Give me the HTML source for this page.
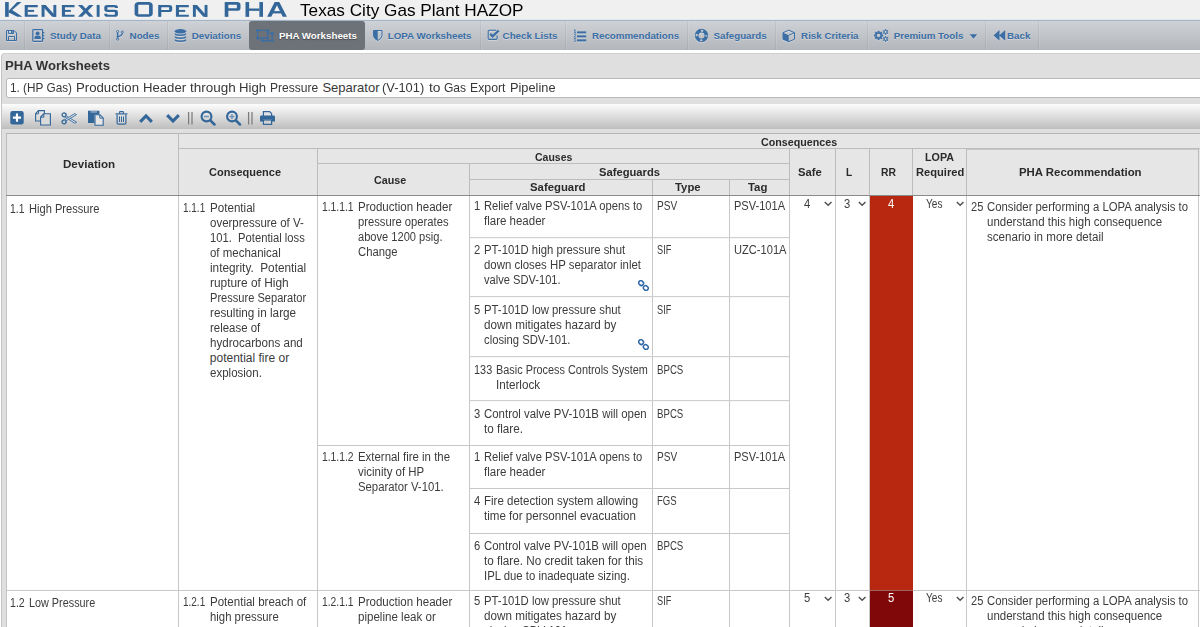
<!DOCTYPE html>
<html><head><meta charset="utf-8"><title>Kenexis Open PHA</title>
<style>
html,body{margin:0;padding:0;}
body{width:1200px;height:627px;overflow:hidden;background:#ffffff;font-family:"Liberation Sans", sans-serif;position:relative;}
#root{position:absolute;left:0;top:0;width:1200px;height:627px;overflow:hidden;}
#root div,#root svg{position:absolute;}
.t{position:absolute;white-space:pre;transform-origin:0 0;display:block;}
</style></head><body><div id="root">
<div style="left:0px;top:0px;width:1200px;height:20px;background:#f0f0f0;"></div>
<svg style="left:0;top:0" width="300" height="20" viewBox="0 0 300 20"><g transform="scale(1.4,1)"><path d="M3.64286 2.05 L6.24286 2.05 L6.24286 16.85 L3.64286 16.85 Z" fill="#336699"/><path d="M6.1 11.05 L12.2143 2.05 L15.3571 2.05 L8.67143 10.05 L16.0714 16.85 L12.3571 16.85 L6.67143 12.85 L6.1 13.65 Z" fill="#336699"/><path d="M17.6429 4.95 L26.9286 4.95 L26.9286 7.15 L19.8429 7.15 L19.8429 14.65 L26.9286 14.65 L26.9286 16.85 L17.6429 16.85 Z" fill="#336699"/><path d="M19.7714 9.91 L24.3571 9.91 L24.3571 11.89 L19.7714 11.89 Z" fill="#336699"/><path d="M29.7143 4.95 L31.8043 4.95 L31.8043 16.85 L29.7143 16.85 Z" fill="#336699"/><path d="M38.1243 4.95 L40.2143 4.95 L40.2143 16.85 L38.1243 16.85 Z" fill="#336699"/><path d="M29.7143 4.95 L32.6614 4.95 L40.2143 16.65 L40.2143 16.85 L37.2671 16.85 L29.7143 5.15 Z" fill="#336699"/><path d="M44.2143 4.95 L53.2143 4.95 L53.2143 7.15 L46.4143 7.15 L46.4143 14.65 L53.2143 14.65 L53.2143 16.85 L44.2143 16.85 Z" fill="#336699"/><path d="M46.3429 9.91 L50.6429 9.91 L50.6429 11.89 L46.3429 11.89 Z" fill="#336699"/><path d="M55.6429 4.95 L58.7143 4.95 L66.7857 16.85 L63.7143 16.85 Z" fill="#336699"/><path d="M66.7857 4.95 L63.7143 4.95 L55.6429 16.85 L58.7143 16.85 Z" fill="#336699"/><path d="M69.0714 4.95 L71.1429 4.95 L71.1429 16.85 L69.0714 16.85 Z" fill="#336699"/><path d="M83.1143 8.03 V7.35 Q83.1143 6.05 81.8143 6.05 H76.9 Q75.6 6.05 75.6 7.35 V9.6 Q75.6 10.9 76.9 10.9 H81.8143 Q83.1143 10.9 83.1143 12.2 V14.45 Q83.1143 15.75 81.8143 15.75 H76.9 Q75.6 15.75 75.6 14.45 V13.77" fill="none" stroke="#336699" stroke-width="2.2" stroke-linejoin="round" stroke-linecap="butt"/><rect x="97.4429" y="3.35" width="10.3286" height="12.2" rx="1.6" ry="1.92" fill="none" stroke="#336699" stroke-width="2.6"/><path d="M113 4.95 L115.2 4.95 L115.2 16.85 L113 16.85 Z" fill="#336699"/><path d="M114.1 6.05 H120.6 Q121.9 6.05 121.9 7.35 V9.69 Q121.9 10.99 120.6 10.99 H114.1" fill="none" stroke="#336699" stroke-width="2.2" stroke-linejoin="miter" stroke-linecap="butt"/><path d="M125.643 4.95 L134.857 4.95 L134.857 7.15 L127.843 7.15 L127.843 14.65 L134.857 14.65 L134.857 16.85 L125.643 16.85 Z" fill="#336699"/><path d="M127.771 9.91 L132.286 9.91 L132.286 11.89 L127.771 11.89 Z" fill="#336699"/><path d="M137.786 4.95 L139.876 4.95 L139.876 16.85 L137.786 16.85 Z" fill="#336699"/><path d="M146.124 4.95 L148.214 4.95 L148.214 16.85 L146.124 16.85 Z" fill="#336699"/><path d="M137.786 4.95 L140.733 4.95 L148.214 16.65 L148.214 16.85 L145.267 16.85 L137.786 5.15 Z" fill="#336699"/><path d="M160.5 2.05 L163.1 2.05 L163.1 16.85 L160.5 16.85 Z" fill="#336699"/><path d="M161.8 3.35 H169.186 Q170.486 3.35 170.486 4.65 V8.256 Q170.486 9.556 169.186 9.556 H161.8" fill="none" stroke="#336699" stroke-width="2.6" stroke-linejoin="miter" stroke-linecap="butt"/><path d="M175.357 2.05 L177.957 2.05 L177.957 16.85 L175.357 16.85 Z" fill="#336699"/><path d="M185.257 2.05 L187.857 2.05 L187.857 16.85 L185.257 16.85 Z" fill="#336699"/><path d="M177.886 8.502 L185.329 8.502 L185.329 10.842 L177.886 10.842 Z" fill="#336699"/><path d="M190.786 16.85 L196.214 2.05 L199.5 2.05 L204.929 16.85 L201.929 16.85 L197.857 5.25 L193.786 16.85 Z" fill="#336699"/><path d="M194.714 11.112 L201 11.112 L201 13.412 L194.714 13.412 Z" fill="#336699"/></g></svg>
<div style="left:0px;top:20px;width:1200px;height:30px;background:linear-gradient(#ced1d5,#b3b6bb);border-top:1px solid #a5b5c8;box-sizing:border-box;"></div>
<div style="left:0px;top:19px;width:1200px;height:1px;background:#e6e9ee;"></div>
<div style="left:24px;top:21px;width:1px;height:29px;background:rgba(0,0,0,0.055);"></div>
<div style="left:25px;top:21px;width:1px;height:29px;background:rgba(255,255,255,0.10);"></div>
<div style="left:109px;top:21px;width:1px;height:29px;background:rgba(0,0,0,0.055);"></div>
<div style="left:110px;top:21px;width:1px;height:29px;background:rgba(255,255,255,0.10);"></div>
<div style="left:167px;top:21px;width:1px;height:29px;background:rgba(0,0,0,0.055);"></div>
<div style="left:168px;top:21px;width:1px;height:29px;background:rgba(255,255,255,0.10);"></div>
<div style="left:480px;top:21px;width:1px;height:29px;background:rgba(0,0,0,0.055);"></div>
<div style="left:481px;top:21px;width:1px;height:29px;background:rgba(255,255,255,0.10);"></div>
<div style="left:565px;top:21px;width:1px;height:29px;background:rgba(0,0,0,0.055);"></div>
<div style="left:566px;top:21px;width:1px;height:29px;background:rgba(255,255,255,0.10);"></div>
<div style="left:687px;top:21px;width:1px;height:29px;background:rgba(0,0,0,0.055);"></div>
<div style="left:688px;top:21px;width:1px;height:29px;background:rgba(255,255,255,0.10);"></div>
<div style="left:775px;top:21px;width:1px;height:29px;background:rgba(0,0,0,0.055);"></div>
<div style="left:776px;top:21px;width:1px;height:29px;background:rgba(255,255,255,0.10);"></div>
<div style="left:867px;top:21px;width:1px;height:29px;background:rgba(0,0,0,0.055);"></div>
<div style="left:868px;top:21px;width:1px;height:29px;background:rgba(255,255,255,0.10);"></div>
<div style="left:985px;top:21px;width:1px;height:29px;background:rgba(0,0,0,0.055);"></div>
<div style="left:986px;top:21px;width:1px;height:29px;background:rgba(255,255,255,0.10);"></div>
<div style="left:1038px;top:21px;width:1px;height:29px;background:rgba(0,0,0,0.055);"></div>
<div style="left:1039px;top:21px;width:1px;height:29px;background:rgba(255,255,255,0.10);"></div>
<div style="left:249px;top:21px;width:116px;height:29px;background:#6d7178;border-radius:3px;"></div>
<div style="left:1px;top:53px;width:1210px;height:600px;background:#dfdfdf;border:1px solid #c4c4c4;border-top-color:#d0d0d0;border-radius:4px;box-sizing:border-box;"></div>
<div style="left:6px;top:78px;width:1210px;height:20px;background:#fff;border:1px solid #b8b8b8;border-radius:3px;box-sizing:border-box;"></div>
<div style="left:2px;top:104px;width:1200px;height:25px;background:linear-gradient(#fdfdfd,#bebebe);"></div>
<div style="left:6px;top:133px;width:1194px;height:63px;background:#e6e6e6;"></div>
<div style="left:6px;top:196px;width:1194px;height:440px;background:#ffffff;"></div>
<div style="left:6px;top:196px;width:1px;height:440px;background:#c8c8c8;"></div>
<div style="left:178px;top:196px;width:1px;height:440px;background:#c8c8c8;"></div>
<div style="left:317px;top:196px;width:1px;height:440px;background:#c8c8c8;"></div>
<div style="left:469px;top:196px;width:1px;height:440px;background:#c8c8c8;"></div>
<div style="left:652px;top:196px;width:1px;height:440px;background:#c8c8c8;"></div>
<div style="left:729px;top:196px;width:1px;height:440px;background:#c8c8c8;"></div>
<div style="left:789px;top:196px;width:1px;height:440px;background:#c8c8c8;"></div>
<div style="left:835px;top:196px;width:1px;height:440px;background:#c8c8c8;"></div>
<div style="left:869px;top:196px;width:1px;height:440px;background:#c8c8c8;"></div>
<div style="left:912px;top:196px;width:1px;height:440px;background:#c8c8c8;"></div>
<div style="left:966px;top:196px;width:1px;height:440px;background:#c8c8c8;"></div>
<div style="left:1198px;top:196px;width:1px;height:440px;background:#c8c8c8;"></div>
<div style="left:6px;top:196px;width:1px;height:500px;background:#c4c4c4;"></div>
<div style="left:6px;top:133px;width:1px;height:63px;background:#bcbcbc;"></div>
<div style="left:870px;top:196px;width:42.5px;height:394px;background:#b82811;"></div>
<div style="left:870px;top:591px;width:42.5px;height:40px;background:#800808;"></div>
<div style="left:470px;top:237px;width:319px;height:1px;background:#d0d0d0;"></div>
<div style="left:470px;top:238px;width:319px;height:1px;background:rgba(0,0,0,0.03);"></div>
<div style="left:470px;top:296px;width:319px;height:1px;background:#d0d0d0;"></div>
<div style="left:470px;top:297px;width:319px;height:1px;background:rgba(0,0,0,0.03);"></div>
<div style="left:470px;top:356px;width:319px;height:1px;background:#d0d0d0;"></div>
<div style="left:470px;top:357px;width:319px;height:1px;background:rgba(0,0,0,0.03);"></div>
<div style="left:470px;top:400px;width:319px;height:1px;background:#d0d0d0;"></div>
<div style="left:470px;top:401px;width:319px;height:1px;background:rgba(0,0,0,0.03);"></div>
<div style="left:318px;top:445px;width:471px;height:1px;background:#c8c8c8;"></div>
<div style="left:470px;top:488px;width:319px;height:1px;background:#c8c8c8;"></div>
<div style="left:470px;top:533px;width:319px;height:1px;background:#c8c8c8;"></div>
<div style="left:7px;top:590px;width:1193px;height:1px;background:#c8c8c8;"></div>
<div style="left:870px;top:590px;width:42.5px;height:1px;background:#9a6660;"></div>
<div style="left:6px;top:133px;width:1194px;height:1px;background:#b4b4b4;"></div>
<div style="left:178px;top:148px;width:1022px;height:1px;background:#bcbcbc;"></div>
<div style="left:967px;top:149px;width:231px;height:1px;background:#c6c6c6;"></div>
<div style="left:317px;top:163px;width:472px;height:1px;background:#bcbcbc;"></div>
<div style="left:469px;top:179px;width:320px;height:1px;background:#bcbcbc;"></div>
<div style="left:6px;top:195px;width:1194px;height:1px;background:#8a8a8a;"></div>
<div style="left:178px;top:133px;width:1px;height:62px;background:#bcbcbc;"></div>
<div style="left:317px;top:148px;width:1px;height:47px;background:#bcbcbc;"></div>
<div style="left:789px;top:148px;width:1px;height:47px;background:#bcbcbc;"></div>
<div style="left:835px;top:148px;width:1px;height:47px;background:#bcbcbc;"></div>
<div style="left:869px;top:148px;width:1px;height:47px;background:#bcbcbc;"></div>
<div style="left:912px;top:148px;width:1px;height:47px;background:#bcbcbc;"></div>
<div style="left:966px;top:148px;width:1px;height:47px;background:#bcbcbc;"></div>
<div style="left:1198px;top:148px;width:1px;height:47px;background:#bcbcbc;"></div>
<div style="left:469px;top:163px;width:1px;height:32px;background:#bcbcbc;"></div>
<div style="left:652px;top:179px;width:1px;height:16px;background:#bcbcbc;"></div>
<div style="left:729px;top:179px;width:1px;height:16px;background:#bcbcbc;"></div>
<svg style="left:0;top:0;filter:drop-shadow(0 1px 0 rgba(255,255,255,0.3))" width="1200" height="52" viewBox="0 0 1200 52"><g transform="translate(6,30)"><path d="M0.5 0.5H8L10.5 3V10.5H0.5Z" fill="none" stroke="#3a6ea5"/><path d="M2.5 0.5V3.5H7.5V0.5" fill="none" stroke="#3a6ea5"/><rect x="5" y="1" width="1.6" height="2" fill="#3a6ea5"/><path d="M2.5 10.5V6.5H8.5V10.5" fill="none" stroke="#3a6ea5"/></g><g transform="translate(32.2,29)"><rect x="0.6" y="0.6" width="9.8" height="11.8" rx="0.8" fill="none" stroke="#3a6ea5" stroke-width="1.2"/><circle cx="5.4" cy="4.6" r="2" fill="#3a6ea5"/><path d="M2.3 10V8.6Q2.3 6.6 5.4 6.6Q8.6 6.6 8.6 8.6V10Z" fill="#3a6ea5"/><rect x="10.8" y="3" width="1.3" height="1.4" fill="#3a6ea5"/><rect x="10.8" y="5.9" width="1.3" height="1.4" fill="#3a6ea5"/><rect x="10.8" y="8.8" width="1.3" height="1.4" fill="#3a6ea5"/></g><g transform="translate(116,30)"><circle cx="1.6" cy="1.6" r="1.1" fill="none" stroke="#3a6ea5" stroke-width="0.9"/><circle cx="1.6" cy="9.2" r="1.1" fill="none" stroke="#3a6ea5" stroke-width="0.9"/><circle cx="6.3" cy="2.2" r="1.1" fill="none" stroke="#3a6ea5" stroke-width="0.9"/><path d="M1.6 2.7V8.1" stroke="#3a6ea5" stroke-width="1.5" fill="none"/><path d="M6.3 3.3Q6.3 5.6 1.9 6.8" stroke="#3a6ea5" stroke-width="1.3" fill="none"/></g><g transform="translate(174.7,29)"><ellipse cx="5.75" cy="2.3" rx="5.75" ry="2.3" fill="#3a6ea5"/><path d="M0 4.3 Q5.75 6.9 11.5 4.3 V5.3 Q11.5 7 5.75 7 Q0 7 0 5.3 Z" fill="#3a6ea5"/><path d="M0 7.3 Q5.75 9.9 11.5 7.3 V8.3 Q11.5 10 5.75 10 Q0 10 0 8.3 Z" fill="#3a6ea5"/><path d="M0 10.3 Q5.75 12.9 11.5 10.3 V11.3 Q11.5 13 5.75 13 Q0 13 0 11.3 Z" fill="#3a6ea5"/></g><g transform="translate(373,30)"><path d="M0.5 0.5H9V5.5Q9 8.6 4.75 10.5Q0.5 8.6 0.5 5.5Z" fill="none" stroke="#3a6ea5" stroke-width="1"/><path d="M0.5 0.5H4.75V10.5Q0.5 8.6 0.5 5.5Z" fill="#3a6ea5"/></g><g transform="translate(487.6,29.5)"><path d="M9.5 6V8.8Q9.5 9.9 8.4 9.9H1.7Q0.6 9.9 0.6 8.8V1.9Q0.6 0.8 1.7 0.8H8.6" fill="none" stroke="#3a6ea5" stroke-width="1.1"/><path d="M2.6 4.4L5 6.8L11.2 1" fill="none" stroke="#3a6ea5" stroke-width="2.3"/></g><g transform="translate(573.4,29.2)"><rect x="3.6" y="2.2" width="9.2" height="2" fill="#3a6ea5"/><rect x="3.6" y="6.2" width="9.2" height="2" fill="#3a6ea5"/><rect x="3.6" y="10.2" width="9.2" height="2" fill="#3a6ea5"/><path d="M0.7 1.2L1.6 0.4V3.6M0.6 3.7H2.6" stroke="#3a6ea5" stroke-width="0.9" fill="none"/><path d="M0.5 5.4Q1.5 4.6 2.3 5.4Q2.6 6.2 0.6 7.9H2.6" stroke="#3a6ea5" stroke-width="0.8" fill="none"/><path d="M0.5 9.4H2.3L1.4 10.5Q2.6 10.6 2.4 11.7Q1.8 12.8 0.4 12.1" stroke="#3a6ea5" stroke-width="0.8" fill="none"/></g><g transform="translate(694.8,28.8)"><circle cx="6.7" cy="6.7" r="4.85" fill="none" stroke="#3a6ea5" stroke-width="3.6"/><circle cx="6.7" cy="6.7" r="4.85" fill="none" stroke="#c3c6ca" stroke-width="2" stroke-dasharray="2.3 5.318" stroke-dashoffset="1.15"/></g><g transform="translate(782.5,29.7)"><path d="M6.25 0.5L12 3V9.5L6.25 12L0.5 9.5V3Z" fill="none" stroke="#3a6ea5" stroke-width="1"/><path d="M0.5 3L6.25 5.6V12L0.5 9.5Z" fill="#3a6ea5"/><path d="M6.25 5.6L12 3" stroke="#3a6ea5" stroke-width="1" fill="none"/></g><g transform="translate(874,29.2)"><circle cx="4.6" cy="6.3" r="2.556" fill="none" stroke="#3a6ea5" stroke-width="1.512"/><rect x="3.634" y="1.7" width="1.932" height="2.07" fill="#3a6ea5" transform="rotate(0 4.6 6.3)"/><rect x="3.634" y="1.7" width="1.932" height="2.07" fill="#3a6ea5" transform="rotate(45 4.6 6.3)"/><rect x="3.634" y="1.7" width="1.932" height="2.07" fill="#3a6ea5" transform="rotate(90 4.6 6.3)"/><rect x="3.634" y="1.7" width="1.932" height="2.07" fill="#3a6ea5" transform="rotate(135 4.6 6.3)"/><rect x="3.634" y="1.7" width="1.932" height="2.07" fill="#3a6ea5" transform="rotate(180 4.6 6.3)"/><rect x="3.634" y="1.7" width="1.932" height="2.07" fill="#3a6ea5" transform="rotate(225 4.6 6.3)"/><rect x="3.634" y="1.7" width="1.932" height="2.07" fill="#3a6ea5" transform="rotate(270 4.6 6.3)"/><rect x="3.634" y="1.7" width="1.932" height="2.07" fill="#3a6ea5" transform="rotate(315 4.6 6.3)"/><circle cx="11.6" cy="2.8" r="1.533" fill="none" stroke="#3a6ea5" stroke-width="0.966"/><rect x="11.012" y="0" width="1.176" height="1.26" fill="#3a6ea5" transform="rotate(0 11.6 2.8)"/><rect x="11.012" y="0" width="1.176" height="1.26" fill="#3a6ea5" transform="rotate(60 11.6 2.8)"/><rect x="11.012" y="0" width="1.176" height="1.26" fill="#3a6ea5" transform="rotate(120 11.6 2.8)"/><rect x="11.012" y="0" width="1.176" height="1.26" fill="#3a6ea5" transform="rotate(180 11.6 2.8)"/><rect x="11.012" y="0" width="1.176" height="1.26" fill="#3a6ea5" transform="rotate(240 11.6 2.8)"/><rect x="11.012" y="0" width="1.176" height="1.26" fill="#3a6ea5" transform="rotate(300 11.6 2.8)"/><circle cx="11.6" cy="9.8" r="1.533" fill="none" stroke="#3a6ea5" stroke-width="0.966"/><rect x="11.012" y="7" width="1.176" height="1.26" fill="#3a6ea5" transform="rotate(0 11.6 9.8)"/><rect x="11.012" y="7" width="1.176" height="1.26" fill="#3a6ea5" transform="rotate(60 11.6 9.8)"/><rect x="11.012" y="7" width="1.176" height="1.26" fill="#3a6ea5" transform="rotate(120 11.6 9.8)"/><rect x="11.012" y="7" width="1.176" height="1.26" fill="#3a6ea5" transform="rotate(180 11.6 9.8)"/><rect x="11.012" y="7" width="1.176" height="1.26" fill="#3a6ea5" transform="rotate(240 11.6 9.8)"/><rect x="11.012" y="7" width="1.176" height="1.26" fill="#3a6ea5" transform="rotate(300 11.6 9.8)"/></g><g transform="translate(969.7,34.3)"><path d="M0 0H7.5L3.75 4.5Z" fill="#3a6ea5"/></g><g transform="translate(993.2,30)"><path d="M6.3 0V10.8L0.3 5.4ZM12 0V10.8L6 5.4Z" fill="#3a6ea5"/></g></svg><svg style="left:0;top:0" width="300" height="52" viewBox="0 0 300 52"><g transform="translate(256,28.8)"><rect x="1.6" y="1.6" width="10" height="7.6" fill="none" stroke="#3a6ea5" stroke-width="1.1"/><path d="M11.6 4.4H16.2V11.8H6.4V9.2" fill="none" stroke="#3a6ea5" stroke-width="1.1"/><circle cx="1.6" cy="1.6" r="1.5" fill="#3a6ea5"/><circle cx="11.6" cy="1.6" r="1.5" fill="#3a6ea5"/><circle cx="1.6" cy="9.2" r="1.5" fill="#3a6ea5"/><circle cx="11.6" cy="9.2" r="1.5" fill="#3a6ea5"/><circle cx="16.2" cy="4.4" r="1.5" fill="#3a6ea5"/><circle cx="16.2" cy="11.8" r="1.5" fill="#3a6ea5"/><circle cx="6.4" cy="11.8" r="1.5" fill="#3a6ea5"/></g></svg>
<svg style="left:0;top:0" width="300" height="135" viewBox="0 0 300 135"><g transform="translate(10.3,111)"><rect x="0" y="0" width="13.4" height="13.4" rx="2.2" fill="#336699"/><path d="M6.7 2.6V10.8M2.6 6.7H10.8" stroke="#fff" stroke-width="2.2"/></g><g transform="translate(35,110)"><path d="M3.4 0.6H9.4V11H0.6V3.6Z" fill="none" stroke="#336699" stroke-width="1.1"/><path d="M0.6 3.8H3.6V0.6" fill="none" stroke="#336699" stroke-width="1"/><path d="M8.6 3.8H15.4V15H5.6V7Z" fill="#dadada" stroke="#336699" stroke-width="1.1"/><path d="M5.8 7.2H8.8V4" stroke="#336699" stroke-width="1" fill="none"/></g><g transform="translate(61.5,112)"><ellipse cx="2.6" cy="2.9" rx="2" ry="1.9" fill="none" stroke="#336699" stroke-width="1.3" transform="rotate(25 2.6 2.9)"/><ellipse cx="2.6" cy="9.9" rx="2" ry="1.9" fill="none" stroke="#336699" stroke-width="1.3" transform="rotate(-25 2.6 9.9)"/><path d="M4.2 3.6L15 10.2L13.2 11.2L3.6 5.2Z" fill="#e4e8ee" stroke="#336699" stroke-width="0.9" stroke-linejoin="round"/><path d="M4.2 9.2L15 2.6L13.2 1.6L3.6 7.6Z" fill="#e4e8ee" stroke="#336699" stroke-width="0.9" stroke-linejoin="round"/></g><g transform="translate(88,110.3)"><path d="M0 0.4H11.4V4.2H6.4V12.6H0Z" fill="#336699"/><rect x="2.6" y="1" width="6.4" height="1.3" fill="#9db4cc"/><path d="M7 4.4H12L15.2 7.6V15H7Z" fill="#e6e6e6" stroke="#336699" stroke-width="1.1"/><path d="M11.8 4.6V7.8H15" fill="none" stroke="#336699" stroke-width="1"/></g><g transform="translate(115.5,111)"><path d="M1.6 3.4V12Q1.6 13.2 2.8 13.2H9.2Q10.4 13.2 10.4 12V3.4" fill="none" stroke="#336699" stroke-width="1.2"/><path d="M0 2.9H12" stroke="#336699" stroke-width="1.2"/><path d="M4 2.6V1.4Q4 0.6 4.8 0.6H7.2Q8 0.6 8 1.4V2.6" fill="none" stroke="#336699" stroke-width="1.1"/><path d="M4 5.4V11M6 5.4V11M8 5.4V11" stroke="#336699" stroke-width="1"/></g><g transform="translate(139,113.5)"><path d="M1.2 8.4L7 2.4L12.8 8.4" fill="none" stroke="#336699" stroke-width="3"/></g><g transform="translate(166,113.5)"><path d="M1.2 1.6L7 7.6L12.8 1.6" fill="none" stroke="#336699" stroke-width="3"/></g><g transform="translate(188,112)"><path d="M0.6 0V12.5M4 0V12.5" stroke="#7c7c7c" stroke-width="1.25"/></g><g transform="translate(200.5,110.5)"><circle cx="6" cy="6" r="4.9" fill="none" stroke="#336699" stroke-width="2.1"/><path d="M9.8 9.8L14 14" stroke="#336699" stroke-width="2.5" stroke-linecap="round"/><path d="M3.5 6H8.5" stroke="#6f93b8" stroke-width="1.5"/></g><g transform="translate(226,110.5)"><circle cx="6" cy="6" r="4.9" fill="none" stroke="#336699" stroke-width="2.1"/><path d="M9.8 9.8L14 14" stroke="#336699" stroke-width="2.5" stroke-linecap="round"/><path d="M3.5 6H8.5" stroke="#6f93b8" stroke-width="1.5"/><path d="M6 3.5V8.5" stroke="#6f93b8" stroke-width="1.5"/></g><g transform="translate(248,112)"><path d="M0.6 0V12.5M4 0V12.5" stroke="#7c7c7c" stroke-width="1.25"/></g><g transform="translate(260,111)"><path d="M3.4 5V0.6H9.6L11.6 2.6V5" fill="none" stroke="#336699" stroke-width="1.2"/><path d="M1.4 4.6H13.6Q15 4.6 15 6V10.4H12V8.6H3V10.4H0V6Q0 4.6 1.4 4.6Z" fill="#336699"/><rect x="3.4" y="9" width="8.2" height="4.4" fill="none" stroke="#336699" stroke-width="1.2"/></g></svg>
<svg style="left:637.6px;top:279.6px" width="11" height="11" viewBox="0 0 11 11"><rect x="-2.5" y="-2.15" width="5" height="4.3" rx="2.1" fill="none" stroke="#2f68a6" stroke-width="1.5" transform="translate(3.1,3.1) rotate(45)"/><rect x="-2.5" y="-2.15" width="5" height="4.3" rx="2.1" fill="none" stroke="#2f68a6" stroke-width="1.5" transform="translate(7.8,8) rotate(45)"/></svg>
<svg style="left:637.6px;top:339.4px" width="11" height="11" viewBox="0 0 11 11"><rect x="-2.5" y="-2.15" width="5" height="4.3" rx="2.1" fill="none" stroke="#2f68a6" stroke-width="1.5" transform="translate(3.1,3.1) rotate(45)"/><rect x="-2.5" y="-2.15" width="5" height="4.3" rx="2.1" fill="none" stroke="#2f68a6" stroke-width="1.5" transform="translate(7.8,8) rotate(45)"/></svg>
<svg style="left:824.2px;top:201.2px" width="9" height="6" viewBox="0 0 9 6"><path d="M0.8 0.9L4.15 4.3L7.5 0.9" fill="none" stroke="#505050" stroke-width="1.4"/></svg>
<svg style="left:858.2px;top:201.2px" width="9" height="6" viewBox="0 0 9 6"><path d="M0.8 0.9L4.15 4.3L7.5 0.9" fill="none" stroke="#505050" stroke-width="1.4"/></svg>
<svg style="left:955.5px;top:201.2px" width="9" height="6" viewBox="0 0 9 6"><path d="M0.8 0.9L4.15 4.3L7.5 0.9" fill="none" stroke="#505050" stroke-width="1.4"/></svg>
<svg style="left:824.2px;top:595.6px" width="9" height="6" viewBox="0 0 9 6"><path d="M0.8 0.9L4.15 4.3L7.5 0.9" fill="none" stroke="#505050" stroke-width="1.4"/></svg>
<svg style="left:858.2px;top:595.6px" width="9" height="6" viewBox="0 0 9 6"><path d="M0.8 0.9L4.15 4.3L7.5 0.9" fill="none" stroke="#505050" stroke-width="1.4"/></svg>
<svg style="left:955.5px;top:595.6px" width="9" height="6" viewBox="0 0 9 6"><path d="M0.8 0.9L4.15 4.3L7.5 0.9" fill="none" stroke="#505050" stroke-width="1.4"/></svg>
<span class="t" style="left:300px;top:1px;font-size:17px;color:#000;line-height:20px;transform:scaleX(1.0110);">Texas City Gas Plant HAZOP</span>
<span class="t" style="left:50px;top:28.8px;font-size:9.75px;font-weight:bold;color:#3a6ea5;line-height:14px;text-shadow:0 1px 0 rgba(255,255,255,0.35);">Study Data</span>
<span class="t" style="left:129.6px;top:28.8px;font-size:9.75px;font-weight:bold;color:#3a6ea5;line-height:14px;text-shadow:0 1px 0 rgba(255,255,255,0.35);">Nodes</span>
<span class="t" style="left:191.75px;top:28.8px;font-size:9.75px;font-weight:bold;color:#3a6ea5;line-height:14px;text-shadow:0 1px 0 rgba(255,255,255,0.35);">Deviations</span>
<span class="t" style="left:387.7px;top:28.8px;font-size:9.75px;font-weight:bold;color:#3a6ea5;line-height:14px;text-shadow:0 1px 0 rgba(255,255,255,0.35);">LOPA Worksheets</span>
<span class="t" style="left:502.6px;top:28.8px;font-size:9.75px;font-weight:bold;color:#3a6ea5;line-height:14px;text-shadow:0 1px 0 rgba(255,255,255,0.35);">Check Lists</span>
<span class="t" style="left:591.95px;top:28.8px;font-size:9.75px;font-weight:bold;color:#3a6ea5;line-height:14px;text-shadow:0 1px 0 rgba(255,255,255,0.35);">Recommendations</span>
<span class="t" style="left:713.6px;top:28.8px;font-size:9.75px;font-weight:bold;color:#3a6ea5;line-height:14px;text-shadow:0 1px 0 rgba(255,255,255,0.35);">Safeguards</span>
<span class="t" style="left:801.1px;top:28.8px;font-size:9.75px;font-weight:bold;color:#3a6ea5;line-height:14px;text-shadow:0 1px 0 rgba(255,255,255,0.35);">Risk Criteria</span>
<span class="t" style="left:893.7px;top:28.8px;font-size:9.75px;font-weight:bold;color:#3a6ea5;line-height:14px;text-shadow:0 1px 0 rgba(255,255,255,0.35);">Premium Tools</span>
<span class="t" style="left:1007px;top:28.8px;font-size:9.75px;font-weight:bold;color:#3a6ea5;line-height:14px;text-shadow:0 1px 0 rgba(255,255,255,0.35);">Back</span>
<span class="t" style="left:278.9px;top:28.8px;font-size:9.75px;font-weight:bold;color:#fff;line-height:14px;text-shadow:0 1px 1px rgba(0,0,0,0.4);">PHA Worksheets</span>
<span class="t" style="left:5.4px;top:58px;font-size:13px;font-weight:bold;color:#333;line-height:16px;transform:scaleX(1.0092);">PHA Worksheets</span>
<span class="t" style="left:9.7px;top:79px;font-size:13px;color:#383838;line-height:18px;transform:scaleX(0.9066);">1. (HP Gas)</span>
<span class="t" style="left:76.1px;top:79px;font-size:13px;color:#383838;line-height:18px;transform:scaleX(1.0136);">Production</span>
<span class="t" style="left:143.1px;top:79px;font-size:13px;color:#383838;line-height:18px;transform:scaleX(1.0108);">Header</span>
<span class="t" style="left:189.7px;top:79px;font-size:13px;color:#383838;line-height:18px;transform:scaleX(1.0364);">through</span>
<span class="t" style="left:239.1px;top:79px;font-size:13px;color:#383838;line-height:18px;transform:scaleX(1.0131);">High</span>
<span class="t" style="left:270.2px;top:79px;font-size:13px;color:#383838;line-height:18px;transform:scaleX(0.9264);">Pressure</span>
<span class="t" style="left:322.4px;top:79px;font-size:13px;color:#383838;line-height:18px;">Separator</span>
<span class="t" style="left:382.4px;top:79px;font-size:13px;color:#383838;line-height:18px;transform:scaleX(0.9897);">(V-101)</span>
<span class="t" style="left:428.6px;top:79px;font-size:13px;color:#383838;line-height:18px;transform:scaleX(1.0605);">to</span>
<span class="t" style="left:444.1px;top:79px;font-size:13px;color:#383838;line-height:18px;transform:scaleX(0.9269);">Gas</span>
<span class="t" style="left:470.2px;top:79px;font-size:13px;color:#383838;line-height:18px;transform:scaleX(0.9447);">Export</span>
<span class="t" style="left:510.2px;top:79px;font-size:13px;color:#383838;line-height:18px;transform:scaleX(0.9835);">Pipeline</span>
<span class="t" style="left:63.2px;top:157px;font-size:11.5px;font-weight:bold;color:#2b2b2b;line-height:15px;transform:scaleX(1.0084);">Deviation</span>
<span class="t" style="left:208.9px;top:165px;font-size:11.5px;font-weight:bold;color:#2b2b2b;line-height:15px;transform:scaleX(0.9546);">Consequence</span>
<span class="t" style="left:374.2px;top:173px;font-size:11.5px;font-weight:bold;color:#2b2b2b;line-height:15px;transform:scaleX(0.9325);">Cause</span>
<span class="t" style="left:760.9px;top:135px;font-size:11.5px;font-weight:bold;color:#2b2b2b;line-height:15px;transform:scaleX(0.9320);">Consequences</span>
<span class="t" style="left:535.1px;top:150px;font-size:11.5px;font-weight:bold;color:#2b2b2b;line-height:15px;transform:scaleX(0.9115);">Causes</span>
<span class="t" style="left:599.15px;top:165px;font-size:11.5px;font-weight:bold;color:#2b2b2b;line-height:15px;transform:scaleX(0.9738);">Safeguards</span>
<span class="t" style="left:530.15px;top:180px;font-size:11.5px;font-weight:bold;color:#2b2b2b;line-height:15px;transform:scaleX(0.9867);">Safeguard</span>
<span class="t" style="left:675.4px;top:180px;font-size:11.5px;font-weight:bold;color:#2b2b2b;line-height:15px;transform:scaleX(0.9885);">Type</span>
<span class="t" style="left:747.7px;top:180px;font-size:11.5px;font-weight:bold;color:#2b2b2b;line-height:15px;transform:scaleX(0.9901);">Tag</span>
<span class="t" style="left:797.6px;top:165px;font-size:11.5px;font-weight:bold;color:#2b2b2b;line-height:15px;transform:scaleX(0.9795);">Safe</span>
<span class="t" style="left:846.2px;top:165px;font-size:11.5px;font-weight:bold;color:#2b2b2b;line-height:15px;transform:scaleX(0.8818);">L</span>
<span class="t" style="left:880.9px;top:165px;font-size:11.5px;font-weight:bold;color:#2b2b2b;line-height:15px;transform:scaleX(0.9023);">RR</span>
<span class="t" style="left:925.1px;top:150px;font-size:11.5px;font-weight:bold;color:#2b2b2b;line-height:15px;transform:scaleX(0.9327);">LOPA</span>
<span class="t" style="left:915.6px;top:165px;font-size:11.5px;font-weight:bold;color:#2b2b2b;line-height:15px;transform:scaleX(0.9690);">Required</span>
<span class="t" style="left:1018.8px;top:165px;font-size:11.5px;font-weight:bold;color:#2b2b2b;line-height:15px;transform:scaleX(0.9923);">PHA Recommendation</span>
<span class="t" style="left:10.2px;top:202px;font-size:12px;color:#3c3c3c;line-height:15px;transform:scaleX(0.8629);">1.1</span>
<span class="t" style="left:29px;top:202px;font-size:12px;color:#3c3c3c;line-height:15px;transform:scaleX(0.9259);">High Pressure</span>
<span class="t" style="left:183.2px;top:201px;font-size:12px;color:#3c3c3c;line-height:15px;transform:scaleX(0.8314);">1.1.1</span>
<span class="t" style="left:209.8px;top:201px;font-size:12px;color:#3c3c3c;line-height:15px;transform:scaleX(0.9678);">Potential</span>
<span class="t" style="left:209.8px;top:216px;font-size:12px;color:#3c3c3c;line-height:15px;transform:scaleX(0.9567);">overpressure of V-</span>
<span class="t" style="left:209.8px;top:231px;font-size:12px;color:#3c3c3c;line-height:15px;transform:scaleX(0.9349);">101.  Potential loss</span>
<span class="t" style="left:209.8px;top:246px;font-size:12px;color:#3c3c3c;line-height:15px;transform:scaleX(0.9548);">of mechanical</span>
<span class="t" style="left:209.8px;top:261px;font-size:12px;color:#3c3c3c;line-height:15px;transform:scaleX(0.9823);">integrity.  Potential</span>
<span class="t" style="left:209.8px;top:276px;font-size:12px;color:#3c3c3c;line-height:15px;transform:scaleX(0.9913);">rupture of High</span>
<span class="t" style="left:209.8px;top:291px;font-size:12px;color:#3c3c3c;line-height:15px;transform:scaleX(0.9235);">Pressure Separator</span>
<span class="t" style="left:209.8px;top:306px;font-size:12px;color:#3c3c3c;line-height:15px;transform:scaleX(0.9777);">resulting in large</span>
<span class="t" style="left:209.8px;top:321px;font-size:12px;color:#3c3c3c;line-height:15px;transform:scaleX(0.9525);">release of</span>
<span class="t" style="left:209.8px;top:336px;font-size:12px;color:#3c3c3c;line-height:15px;transform:scaleX(0.9659);">hydrocarbons and</span>
<span class="t" style="left:209.8px;top:351px;font-size:12px;color:#3c3c3c;line-height:15px;">potential fire or</span>
<span class="t" style="left:209.8px;top:366px;font-size:12px;color:#3c3c3c;line-height:15px;transform:scaleX(0.9603);">explosion.</span>
<span class="t" style="left:321.6px;top:200px;font-size:12px;color:#3c3c3c;line-height:15px;transform:scaleX(0.8610);">1.1.1.1</span>
<span class="t" style="left:357.6px;top:200px;font-size:12px;color:#3c3c3c;line-height:15px;transform:scaleX(0.9615);">Production header</span>
<span class="t" style="left:357.6px;top:215px;font-size:12px;color:#3c3c3c;line-height:15px;transform:scaleX(0.9356);">pressure operates</span>
<span class="t" style="left:357.6px;top:230px;font-size:12px;color:#3c3c3c;line-height:15px;transform:scaleX(0.9244);">above 1200 psig.</span>
<span class="t" style="left:357.6px;top:245px;font-size:12px;color:#3c3c3c;line-height:15px;transform:scaleX(0.9394);">Change</span>
<span class="t" style="left:321.6px;top:450px;font-size:12px;color:#3c3c3c;line-height:15px;transform:scaleX(0.8610);">1.1.1.2</span>
<span class="t" style="left:357.6px;top:450px;font-size:12px;color:#3c3c3c;line-height:15px;transform:scaleX(0.9512);">External fire in the</span>
<span class="t" style="left:357.6px;top:465px;font-size:12px;color:#3c3c3c;line-height:15px;transform:scaleX(0.9544);">vicinity of HP</span>
<span class="t" style="left:357.6px;top:480px;font-size:12px;color:#3c3c3c;line-height:15px;transform:scaleX(0.9445);">Separator V-101.</span>
<span class="t" style="left:473.8px;top:199px;font-size:12px;color:#3c3c3c;line-height:15px;transform:scaleX(0.9350);">1</span>
<span class="t" style="left:483.7px;top:199px;font-size:12px;color:#3c3c3c;line-height:15px;transform:scaleX(0.9342);">Relief valve PSV-101A opens to</span>
<span class="t" style="left:483.7px;top:214px;font-size:12px;color:#3c3c3c;line-height:15px;transform:scaleX(0.9587);">flare header</span>
<span class="t" style="left:656.65px;top:199px;font-size:12px;color:#3c3c3c;line-height:15px;transform:scaleX(0.8411);">PSV</span>
<span class="t" style="left:733.5px;top:199px;font-size:12px;color:#3c3c3c;line-height:15px;transform:scaleX(0.9210);">PSV-101A</span>
<span class="t" style="left:473.8px;top:243px;font-size:12px;color:#3c3c3c;line-height:15px;transform:scaleX(0.9350);">2</span>
<span class="t" style="left:483.7px;top:243px;font-size:12px;color:#3c3c3c;line-height:15px;transform:scaleX(0.9443);">PT-101D high pressure shut</span>
<span class="t" style="left:483.7px;top:258px;font-size:12px;color:#3c3c3c;line-height:15px;transform:scaleX(0.9503);">down closes HP separator inlet</span>
<span class="t" style="left:483.7px;top:273px;font-size:12px;color:#3c3c3c;line-height:15px;transform:scaleX(0.9260);">valve SDV-101.</span>
<span class="t" style="left:656.65px;top:243px;font-size:12px;color:#3c3c3c;line-height:15px;transform:scaleX(0.7659);">SIF</span>
<span class="t" style="left:733.5px;top:243px;font-size:12px;color:#3c3c3c;line-height:15px;transform:scaleX(0.9261);">UZC-101A</span>
<span class="t" style="left:473.8px;top:303px;font-size:12px;color:#3c3c3c;line-height:15px;transform:scaleX(0.9350);">5</span>
<span class="t" style="left:483.7px;top:303px;font-size:12px;color:#3c3c3c;line-height:15px;transform:scaleX(0.9445);">PT-101D low pressure shut</span>
<span class="t" style="left:483.7px;top:318px;font-size:12px;color:#3c3c3c;line-height:15px;transform:scaleX(0.9730);">down mitigates hazard by</span>
<span class="t" style="left:483.7px;top:333px;font-size:12px;color:#3c3c3c;line-height:15px;transform:scaleX(0.9385);">closing SDV-101.</span>
<span class="t" style="left:656.65px;top:303px;font-size:12px;color:#3c3c3c;line-height:15px;transform:scaleX(0.7659);">SIF</span>
<span class="t" style="left:473.7px;top:363px;font-size:12px;color:#3c3c3c;line-height:15px;transform:scaleX(0.9086);">133</span>
<span class="t" style="left:496.2px;top:363px;font-size:12px;color:#3c3c3c;line-height:15px;transform:scaleX(0.9069);">Basic Process Controls System</span>
<span class="t" style="left:496.2px;top:378px;font-size:12px;color:#3c3c3c;line-height:15px;transform:scaleX(0.9722);">Interlock</span>
<span class="t" style="left:656.65px;top:363px;font-size:12px;color:#3c3c3c;line-height:15px;transform:scaleX(0.8046);">BPCS</span>
<span class="t" style="left:473.8px;top:407px;font-size:12px;color:#3c3c3c;line-height:15px;transform:scaleX(0.9350);">3</span>
<span class="t" style="left:483.7px;top:407px;font-size:12px;color:#3c3c3c;line-height:15px;transform:scaleX(0.9522);">Control valve PV-101B will open</span>
<span class="t" style="left:483.7px;top:422px;font-size:12px;color:#3c3c3c;line-height:15px;transform:scaleX(0.9742);">to flare.</span>
<span class="t" style="left:656.65px;top:407px;font-size:12px;color:#3c3c3c;line-height:15px;transform:scaleX(0.8046);">BPCS</span>
<span class="t" style="left:473.8px;top:450px;font-size:12px;color:#3c3c3c;line-height:15px;transform:scaleX(0.9350);">1</span>
<span class="t" style="left:483.7px;top:450px;font-size:12px;color:#3c3c3c;line-height:15px;transform:scaleX(0.9342);">Relief valve PSV-101A opens to</span>
<span class="t" style="left:483.7px;top:465px;font-size:12px;color:#3c3c3c;line-height:15px;transform:scaleX(0.9587);">flare header</span>
<span class="t" style="left:656.65px;top:450px;font-size:12px;color:#3c3c3c;line-height:15px;transform:scaleX(0.8411);">PSV</span>
<span class="t" style="left:733.5px;top:450px;font-size:12px;color:#3c3c3c;line-height:15px;transform:scaleX(0.9210);">PSV-101A</span>
<span class="t" style="left:473.8px;top:494px;font-size:12px;color:#3c3c3c;line-height:15px;transform:scaleX(0.9350);">4</span>
<span class="t" style="left:483.7px;top:494px;font-size:12px;color:#3c3c3c;line-height:15px;transform:scaleX(0.9587);">Fire detection system allowing</span>
<span class="t" style="left:483.7px;top:509px;font-size:12px;color:#3c3c3c;line-height:15px;transform:scaleX(0.9648);">time for personnel evacuation</span>
<span class="t" style="left:656.65px;top:494px;font-size:12px;color:#3c3c3c;line-height:15px;transform:scaleX(0.7985);">FGS</span>
<span class="t" style="left:473.8px;top:539px;font-size:12px;color:#3c3c3c;line-height:15px;transform:scaleX(0.9350);">6</span>
<span class="t" style="left:483.7px;top:539px;font-size:12px;color:#3c3c3c;line-height:15px;transform:scaleX(0.9522);">Control valve PV-101B will open</span>
<span class="t" style="left:483.7px;top:554px;font-size:12px;color:#3c3c3c;line-height:15px;transform:scaleX(0.9743);">to flare. No credit taken for this</span>
<span class="t" style="left:483.7px;top:569px;font-size:12px;color:#3c3c3c;line-height:15px;transform:scaleX(0.9446);">IPL due to inadequate sizing.</span>
<span class="t" style="left:656.65px;top:539px;font-size:12px;color:#3c3c3c;line-height:15px;transform:scaleX(0.8046);">BPCS</span>
<span class="t" style="left:473.8px;top:594px;font-size:12px;color:#3c3c3c;line-height:15px;transform:scaleX(0.9350);">5</span>
<span class="t" style="left:483.7px;top:594px;font-size:12px;color:#3c3c3c;line-height:15px;transform:scaleX(0.9445);">PT-101D low pressure shut</span>
<span class="t" style="left:483.7px;top:609px;font-size:12px;color:#3c3c3c;line-height:15px;transform:scaleX(0.9730);">down mitigates hazard by</span>
<span class="t" style="left:483.7px;top:624px;font-size:12px;color:#3c3c3c;line-height:15px;transform:scaleX(0.9385);">closing SDV-101.</span>
<span class="t" style="left:656.65px;top:594px;font-size:12px;color:#3c3c3c;line-height:15px;transform:scaleX(0.7659);">SIF</span>
<span class="t" style="left:803.7px;top:197px;font-size:12px;color:#3c3c3c;line-height:15px;transform:scaleX(0.9350);">4</span>
<span class="t" style="left:843.9px;top:197px;font-size:12px;color:#3c3c3c;line-height:15px;transform:scaleX(0.9350);">3</span>
<span class="t" style="left:925.9px;top:197px;font-size:12px;color:#3c3c3c;line-height:15px;transform:scaleX(0.8428);">Yes</span>
<span class="t" style="left:888.1px;top:197px;font-size:12px;color:#fff;line-height:15px;transform:scaleX(0.9350);">4</span>
<span class="t" style="left:970.9px;top:200px;font-size:12px;color:#3c3c3c;line-height:15px;transform:scaleX(0.9207);">25</span>
<span class="t" style="left:987.1px;top:200px;font-size:12px;color:#3c3c3c;line-height:15px;transform:scaleX(0.9456);">Consider performing a LOPA analysis to</span>
<span class="t" style="left:987.1px;top:215px;font-size:12px;color:#3c3c3c;line-height:15px;transform:scaleX(0.9584);">understand this high consequence</span>
<span class="t" style="left:987.1px;top:230px;font-size:12px;color:#3c3c3c;line-height:15px;transform:scaleX(0.9658);">scenario in more detail</span>
<span class="t" style="left:803.7px;top:591px;font-size:12px;color:#3c3c3c;line-height:15px;transform:scaleX(0.9350);">5</span>
<span class="t" style="left:843.9px;top:591px;font-size:12px;color:#3c3c3c;line-height:15px;transform:scaleX(0.9350);">3</span>
<span class="t" style="left:925.9px;top:591px;font-size:12px;color:#3c3c3c;line-height:15px;transform:scaleX(0.8428);">Yes</span>
<span class="t" style="left:888.1px;top:591px;font-size:12px;color:#fff;line-height:15px;transform:scaleX(0.9350);">5</span>
<span class="t" style="left:970.9px;top:594px;font-size:12px;color:#3c3c3c;line-height:15px;transform:scaleX(0.9207);">25</span>
<span class="t" style="left:987.1px;top:594px;font-size:12px;color:#3c3c3c;line-height:15px;transform:scaleX(0.9456);">Consider performing a LOPA analysis to</span>
<span class="t" style="left:987.1px;top:609px;font-size:12px;color:#3c3c3c;line-height:15px;transform:scaleX(0.9584);">understand this high consequence</span>
<span class="t" style="left:987.1px;top:624px;font-size:12px;color:#3c3c3c;line-height:15px;transform:scaleX(0.9658);">scenario in more detail</span>
<span class="t" style="left:10.2px;top:596px;font-size:12px;color:#3c3c3c;line-height:15px;transform:scaleX(0.8809);">1.2</span>
<span class="t" style="left:29.2px;top:596px;font-size:12px;color:#3c3c3c;line-height:15px;transform:scaleX(0.9022);">Low Pressure</span>
<span class="t" style="left:183.2px;top:595px;font-size:12px;color:#3c3c3c;line-height:15px;transform:scaleX(0.8314);">1.2.1</span>
<span class="t" style="left:210.2px;top:595px;font-size:12px;color:#3c3c3c;line-height:15px;transform:scaleX(0.9622);">Potential breach of</span>
<span class="t" style="left:210.2px;top:610px;font-size:12px;color:#3c3c3c;line-height:15px;transform:scaleX(0.9447);">high pressure</span>
<span class="t" style="left:210.2px;top:625px;font-size:12px;color:#3c3c3c;line-height:15px;transform:scaleX(0.9406);">pipeline leading to</span>
<span class="t" style="left:321.6px;top:595px;font-size:12px;color:#3c3c3c;line-height:15px;transform:scaleX(0.8610);">1.2.1.1</span>
<span class="t" style="left:357.6px;top:595px;font-size:12px;color:#3c3c3c;line-height:15px;transform:scaleX(0.9615);">Production header</span>
<span class="t" style="left:357.6px;top:610px;font-size:12px;color:#3c3c3c;line-height:15px;transform:scaleX(0.9638);">pipeline leak or</span>
<span class="t" style="left:357.6px;top:625px;font-size:12px;color:#3c3c3c;line-height:15px;transform:scaleX(0.9502);">rupture due to</span>
</div></body></html>
